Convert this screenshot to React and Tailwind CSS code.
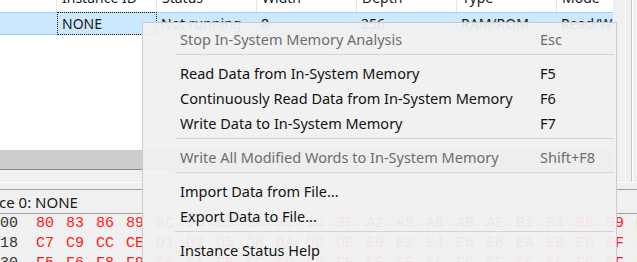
const columns = ["Instance ID", "Status", "Width", "Depth", "Type", "Mode"];
const rowCells = ["NONE", "Not running", "8", "256", "RAM/ROM", "Read/Write"];

const hexValue = (i) =>
  Math.round(128 + 127 * Math.sin((2 * Math.PI * i) / 256))
    .toString(16)
    .toUpperCase()
    .padStart(2, "0");

const hexRows = [
  { addr: "00", start: 0 },
  { addr: "18", start: 24 },
  { addr: "30", start: 48 },
];

const menuItems = [
  { label: "Stop In-System Memory Analysis", key: "Esc", disabled: true },
  "sep",
  { label: "Read Data from In-System Memory", key: "F5" },
  { label: "Continuously Read Data from In-System Memory", key: "F6" },
  { label: "Write Data to In-System Memory", key: "F7" },
  "sep",
  { label: "Write All Modified Words to In-System Memory", key: "Shift+F8", disabled: true },
  "sep",
  { label: "Import Data from File..." },
  { label: "Export Data to File..." },
  "sep",
  { label: "Instance Status Help" },
];

function ContextMenu() {
  return (
    <div className="absolute left-[142px] top-[22px] w-[475px] border border-[#cccccc] bg-[rgba(240,240,240,0.94)] pt-[4px] pb-[4px] text-[14.5px] text-[#111]">
      {menuItems.map((item, i) =>
        item === "sep" ? (
          <div key={i} className="pt-[2px] pb-[6px] pl-[32px] pr-[2px]">
            <div className="h-px bg-[#d4d4d4]" />
          </div>
        ) : (
          <div
            key={i}
            className={`grid h-[25px] grid-cols-[360px_auto] items-center whitespace-nowrap pl-[37px] ${
              item.disabled ? "text-[#6d6d6d]" : ""
            }`}
          >
            <span>{item.label}</span>
            <span>{item.key}</span>
          </div>
        )
      )}
    </div>
  );
}

export default function App() {
  return (
    <div
      className="relative h-[262px] w-[637px] overflow-hidden bg-[#f0f0f0] text-[14px] text-[#1a1a1a]"
      style={{ fontFamily: '"Noto Sans", sans-serif' }}
    >
      {/* top pane: instance table + frame strip */}
      <div className="flex h-[182px]">
        <div className="flex w-[613px] shrink-0 flex-col overflow-hidden">
          <div className="h-[12px] overflow-hidden bg-white">
            <div className="-mt-[16px] flex h-[28px] leading-[20px]">
              <div className="w-[56px] shrink-0" />
              {columns.map((c) => (
                <div key={c} className="w-[100px] shrink-0 whitespace-nowrap border-l border-[#e5e5e5] pl-[5px] pt-[4px]">
                  {c}
                </div>
              ))}
            </div>
          </div>
          <div className="flex h-[23px] border-y border-[#99d1ff] bg-[#cce8ff] leading-[21px]">
            <div className="w-[57px] shrink-0" />
            {rowCells.map((c, i) => (
              <div
                key={c}
                className={`w-[100px] shrink-0 overflow-hidden whitespace-nowrap pl-[4px] ${
                  i === 0 ? "-mt-px h-[23px] border border-dotted border-[#222]" : ""
                }`}
              >
                {c}
              </div>
            ))}
          </div>
          <div className="h-[115px] bg-white" />
          <div className="h-[19px] bg-[#cdcdcd]" />
          <div className="h-px bg-[#868a8f]" />
          <div className="flex-1" />
        </div>
        <div className="flex w-[24px]">
          <div className="w-[12px]" />
          <div className="w-px bg-white" />
          <div className="w-[5px]" />
          <div className="w-px bg-[#c8c8c8]" />
          <div className="w-px bg-white" />
        </div>
      </div>
      <div className="h-px bg-white" />
      <div className="h-[6px]" />
      <div className="h-px bg-[#a0a0a0]" />

      {/* memory editor pane */}
      <div className="-ml-[1px] h-[23px] whitespace-nowrap pt-[1px] text-[15px] leading-[22px]">ce 0: NONE</div>
      <div className="h-px bg-[#a0a0a0]" />
      <div style={{ fontFamily: '"Liberation Mono", monospace' }} className="text-[15px] leading-[20px]">
        {hexRows.map((r) => (
          <div key={r.addr} className="flex whitespace-nowrap">
            <span className="w-[36px] shrink-0 text-[#333]">{r.addr}</span>
            {Array.from({ length: 21 }, (_, k) => (
              <span key={k} className="w-[30px] shrink-0 text-[#ff1a1a]">
                {hexValue(r.start + k)}
              </span>
            ))}
          </div>
        ))}
      </div>

      <ContextMenu />
    </div>
  );
}
